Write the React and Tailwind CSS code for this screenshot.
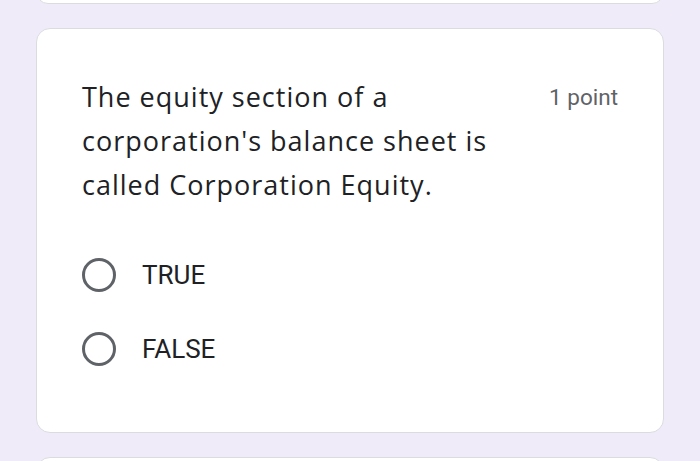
function Radio({ label }) {
    return (
        <label className="flex items-center h-[74px] cursor-pointer">
            <span className="w-[34px] h-[34px] rounded-full border-[3.5px] border-[#5f6368] shrink-0" />
            <span className="ml-[26px] text-[26px] text-[#202124]">{label}</span>
        </label>
    );
}

export default function App() {
    return (
        <div className="w-[700px] h-[461px] overflow-hidden bg-[#f0ebf8] font-['Roboto',sans-serif]">
            <div className="px-[36px] -mt-[20px] flex flex-col gap-[24px]">
                {/* previous card */}
                <div className="h-[24px] bg-white rounded-[14px] border border-[#dadce0]" />

                {/* question card */}
                <div className="h-[405px] bg-white rounded-[14px] border border-[#dadce0] pl-[45px] pr-[45px] pt-[46px]">
                    <div className="flex justify-between items-start">
                        <p className="w-[430px] font-['Open_Sans',sans-serif] text-[27px] leading-[44px] tracking-[1px] text-[#202124]">
                            The equity section of a corporation's balance sheet is called Corporation Equity.
                        </p>
                        <span className="text-[22.5px] leading-[44px] text-[#5f6368]">1 point</span>
                    </div>
                    <div className="mt-[31px] flex flex-col">
                        <Radio label="TRUE" />
                        <Radio label="FALSE" />
                    </div>
                </div>

                {/* next card */}
                <div className="h-[40px] bg-white rounded-[14px] border border-[#dadce0]" />
            </div>
        </div>
    );
}
